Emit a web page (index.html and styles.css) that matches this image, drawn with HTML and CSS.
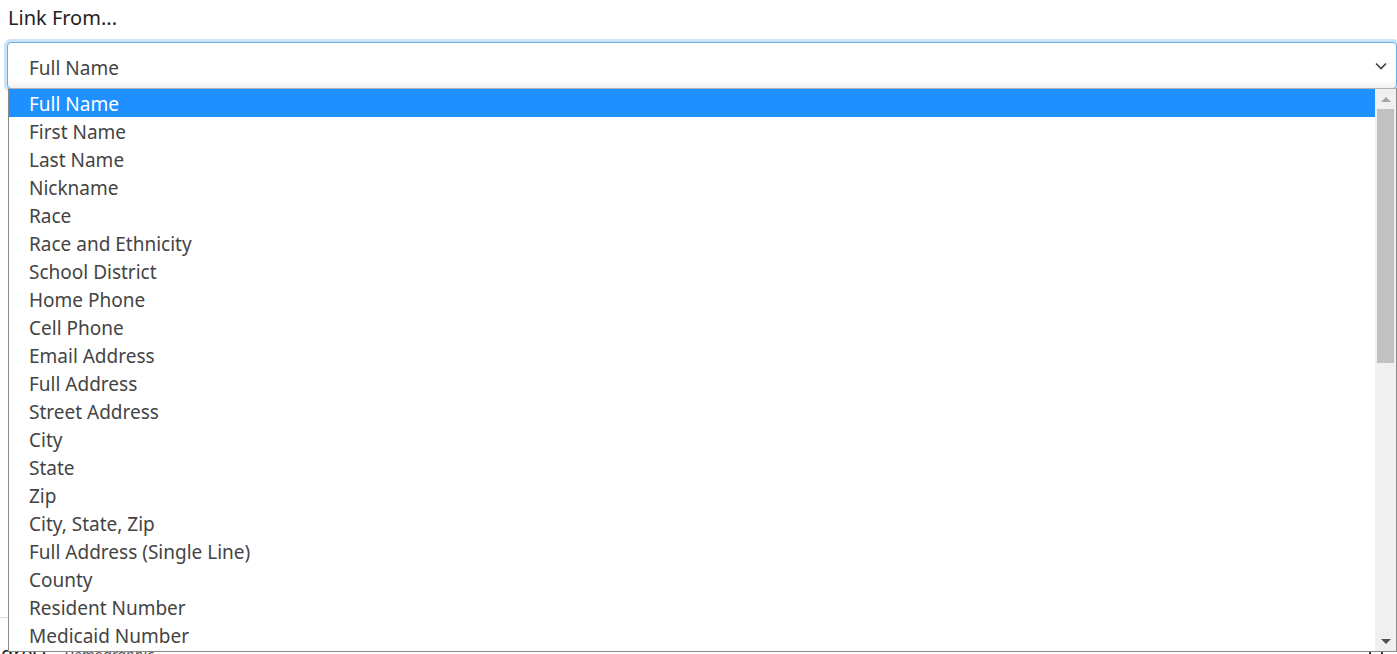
FILE: index.html
```html
<!DOCTYPE html>
<html>
<head>
<meta charset="utf-8">
<link rel="stylesheet" href="styles.css">
</head>
<body>
<div class="page">
  <label class="label">Link From...</label>
  <div class="select-wrap">
    <div class="select">
      <span class="select-value">Full Name</span>
      <svg class="chevron" width="12" height="8" viewBox="0 0 12 8"><path d="M1 1.5 L6 6.5 L11 1.5" fill="none" stroke="#3a3f44" stroke-width="1.6"/></svg>
    </div>
    <div class="dropdown">
      <ul class="options">
        <li class="option selected">Full Name</li>
        <li class="option">First Name</li>
        <li class="option">Last Name</li>
        <li class="option">Nickname</li>
        <li class="option">Race</li>
        <li class="option">Race and Ethnicity</li>
        <li class="option">School District</li>
        <li class="option">Home Phone</li>
        <li class="option">Cell Phone</li>
        <li class="option">Email Address</li>
        <li class="option">Full Address</li>
        <li class="option">Street Address</li>
        <li class="option">City</li>
        <li class="option">State</li>
        <li class="option">Zip</li>
        <li class="option">City, State, Zip</li>
        <li class="option">Full Address (Single Line)</li>
        <li class="option">County</li>
        <li class="option">Resident Number</li>
        <li class="option">Medicaid Number</li>
      </ul>
      <div class="scrollbar">
        <div class="arrow up"></div>
        <div class="track"><div class="thumb"></div></div>
        <div class="arrow down"></div>
      </div>
    </div>
  </div>
  <div class="behind">
    <div class="behind-row">
      <span class="behind-label">Address</span>
      <span class="behind-tag">Demographic</span>
      <span class="behind-icon"></span>
    </div>
  </div>
</div>
</body>
</html>
```

FILE: styles.css
```css
* { box-sizing: border-box; }
html, body { margin: 0; padding: 0; background: #fff; overflow: hidden; }
body {
  font-family: "Noto Sans", "Open Sans", sans-serif;
  color: #333;
  width: 1397px;
  height: 654px;
}
.page { padding: 4px 0 0 8px; position: relative; height: 654px; }
.label {
  display: block;
  font-size: 20px;
  line-height: 28px;
  color: #222;
}
.select-wrap { position: relative; margin-top: 10px; margin-left: -1px; width: 1390px; }
.select {
  height: 47px;
  border: 1px solid #66afe9;
  border-radius: 4px;
  box-shadow: 0 0 0 3px rgba(102,175,233,0.35), inset 0 -8px 8px -6px rgba(0,0,0,0.08);
  display: flex;
  align-items: center;
  justify-content: space-between;
  padding: 4px 9px 0 21px;
  font-size: 19px;
  color: #444;
  background: #fff;
}
.chevron { margin-top: -4px; }
.dropdown {
  position: absolute;
  left: 1px;
  top: 46px;
  width: 1389px;
  height: 564px;
  background: #fff;
  border: 1px solid #8a8a8a;
  border-top-color: #b0b0b0;
  display: flex;
  z-index: 5;
}
.options {
  list-style: none;
  margin: 0;
  padding: 0;
  flex: 1;
  overflow: hidden;
}
.option {
  height: 28px;
  line-height: 30px;
  padding-left: 20px;
  font-size: 19px;
  color: #444;
  white-space: nowrap;
}
.option.selected { background: #1e90ff; color: #fff; }
.scrollbar {
  width: 21px;
  background: #f0f0f0;
  display: flex;
  flex-direction: column;
}
.arrow { height: 20px; display: flex; align-items: center; justify-content: center; }
.arrow.up::before {
  content: "";
  border-left: 5px solid transparent;
  border-right: 5px solid transparent;
  border-bottom: 5px solid #a3a3a3;
}
.arrow.down::before {
  content: "";
  border-left: 5px solid transparent;
  border-right: 5px solid transparent;
  border-top: 5px solid #505050;
}
.track { flex: 1; padding: 0 2px; }
.thumb { height: 254px; background: #c1c1c1; }
.behind {
  position: absolute;
  left: 0;
  top: 617px;
  width: 1397px;
  height: 37px;
  border-top: 1px solid #ddd;
}
.behind-row { display: flex; align-items: center; padding-top: 22px; gap: 12px; margin-left: -24px; }
.behind-label { font-size: 20px; color: #222; }
.behind-tag { font-size: 15px; font-style: italic; color: #555; }
.behind-icon { margin-left: auto; margin-right: 14px; width: 14px; height: 14px; border: 2px solid #333; }
```
